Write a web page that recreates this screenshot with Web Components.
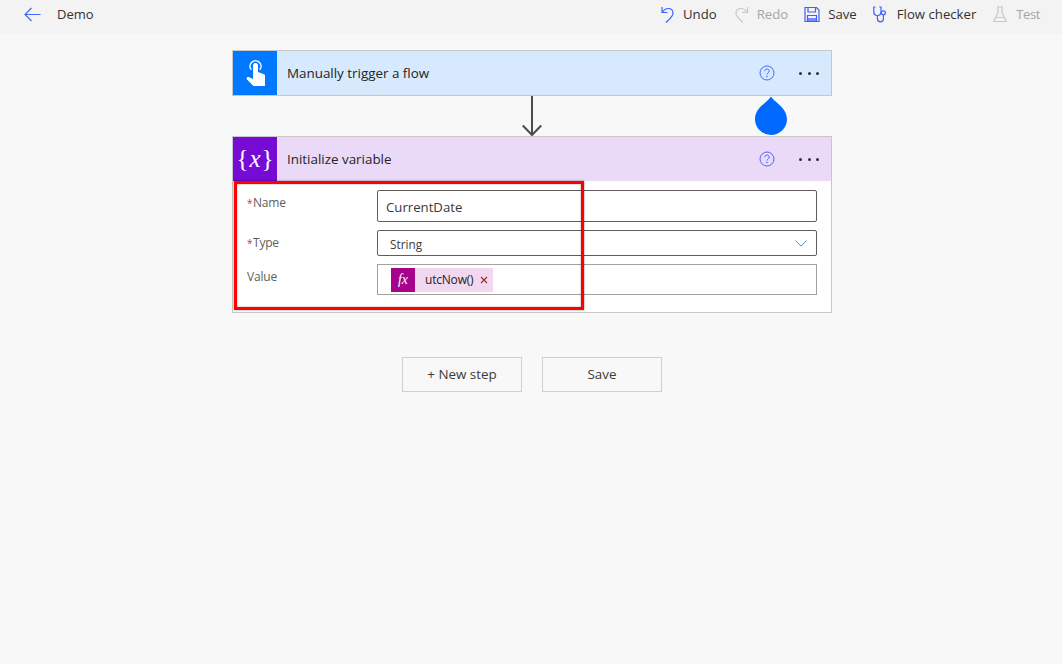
<!DOCTYPE html>
<html>
<head>
<meta charset="utf-8">
<title>Demo</title>
<style>
html, body { margin: 0; height: 100%; background: #f8f8f8; }
body { font-family: "Open Sans", "Noto Sans", sans-serif; color: #323130; }
</style>
</head>
<body>
<flow-designer>
    <flow-toolbar slot="toolbar" name="Demo">
        <tool-button icon="undo" label="Undo"></tool-button>
        <tool-button icon="redo" label="Redo" disabled></tool-button>
        <tool-button icon="save" label="Save"></tool-button>
        <tool-button icon="checker" label="Flow checker"></tool-button>
        <tool-button icon="test" label="Test" disabled style="letter-spacing:-.5px"></tool-button>
    </flow-toolbar>

    <flow-card title="Manually trigger a flow" kind="trigger"></flow-card>
    <flow-arrow></flow-arrow>
    <flow-card title="Initialize variable" kind="variable">
        <form-row label="Name" required style="--mb:8px">
            <text-box height="32" strong>CurrentDate</text-box>
        </form-row>
        <form-row label="Type" required style="--mb:8px">
            <text-box height="26" strong select small>String</text-box>
        </form-row>
        <form-row label="Value">
            <text-box height="31"><fx-chip>utcNow()</fx-chip></text-box>
        </form-row>
    </flow-card>

    <div slot="actions" style="display:flex;gap:20px;justify-content:center">
        <step-button>+ New step</step-button>
        <step-button>Save</step-button>
    </div>

    <red-box slot="overlay"></red-box>
</flow-designer>

<script>
const icons = {
    undo: `<path d="M3 1v5.500H8.500M3.300 6.300C5 3.800 6.500 2.500 9 2.500c3 0 5 2 5 4.800 0 3-2.500 5-5 7.200L7 16.500" />`,
    redo: `<path d="M14.500 1v5.500H9M14.200 6.300C12.500 3.800 10.500 2.500 8 2.500c-3 0-5 2-5 4.800 0 3 2.500 5 5 7.200l2 2" />`,
    save: `<path d="M1 1.500h11.500L15 4v11.500H1zM4 1.500v4.500h7.500V1.500M3.500 15.500V9.500h9v6" /><path d="M3.500 12h9v3.500h-9z" fill="currentColor" stroke="none" opacity=".7"/>`,
    checker: `<path d="M2.500 1H.8v4.500c0 2.500 1.600 4 3.600 4s3.600-1.500 3.600-4V1H6.300M4.400 9.500v3.300c0 1.800 1.300 3 3 3s3-1.200 3-3V9" /><circle cx="10.400" cy="6.800" r="2"/>`,
    test: `<path d="M5 1h6M6 1v5.500L1.500 15.500h13L10 6.500V1M3.500 11.500h9" />`
};

class FlowDesigner extends HTMLElement {
    connectedCallback() {
        this.attachShadow({ mode: "open" }).innerHTML = `
            <style>
                :host { display: block; position: relative; min-height: 664px; background: #f8f8f8; }
                main { width: 600px; margin: 16px auto 0; transform: translateX(1px); display: flex; flex-direction: column; }
                .actions { margin-top: 44px; }
            </style>
            <slot name="toolbar"></slot>
            <main>
                <slot></slot>
                <div class="actions"><slot name="actions"></slot></div>
            </main>
            <slot name="overlay"></slot>`;
    }
}

class FlowToolbar extends HTMLElement {
    connectedCallback() {
        this.attachShadow({ mode: "open" }).innerHTML = `
            <style>
                :host { display: flex; align-items: center; box-sizing: border-box; height: 34px; background: #f3f3f3; padding: 0 22px 6px 24px; font-size: 13px; }
                svg { width: 17px; height: 15px; fill: none; stroke: #4668ff; stroke-width: 1.200; }
                .name { margin-left: 16px; flex: 1; color: #323130; }
                .tools { display: flex; align-items: center; gap: 16px; }
            </style>
            <svg viewBox="0 0 17 15"><path d="M16.500 7.500H1M7.500 1 1 7.500 7.500 14"/></svg>
            <span class="name">${this.getAttribute("name")}</span>
            <div class="tools"><slot></slot></div>`;
    }
}

class ToolButton extends HTMLElement {
    connectedCallback() {
        const off = this.hasAttribute("disabled");
        this.attachShadow({ mode: "open" }).innerHTML = `
            <style>
                :host { display: inline-flex; align-items: center; gap: 8px; font-size: 13.200px; color: ${off ? "#a6a6a6" : "#323130"}; }
                svg { width: 16px; height: 17px; fill: none; stroke: ${off ? "#c8c8c8" : "#3f5fff"}; color: #3f5fff; stroke-width: 1.200; }
            </style>
            <svg viewBox="0 0 16 17">${icons[this.getAttribute("icon")]}</svg>
            <span>${this.getAttribute("label")}</span>`;
    }
}

class FlowCard extends HTMLElement {
    connectedCallback() {
        const trigger = this.getAttribute("kind") === "trigger";
        const tile = trigger
            ? `<svg viewBox="0 0 44 44" width="44" height="44" fill="#fff"><path d="M20 14.500a2.500 2.500 0 0 1 5 0V21l6 2.200c.7.3 1 .8 1 1.500V35H20.500l-6.500-6.500c-.5-.6-.5-1.500 0-2 .6-.6 1.500-.6 2.200-.2L20 28z"/><path d="M18.300 18.800a5.500 5.500 0 1 1 8.400 0" fill="none" stroke="#fff" stroke-width="1.500"/></svg>`
            : `<span class="x"><i>{</i><b>x</b><i>}</i></span>`;
        this.attachShadow({ mode: "open" }).innerHTML = `
            <style>
                :host { display: block; background: #fff; border: 1px solid #c8c8c8; font-size: 13px; }
                header { display: flex; align-items: center; height: 44px; background: ${trigger ? "#d7e9fd" : "#ebdaf7"}; }
                .tile { width: 44px; height: 44px; background: ${trigger ? "#0078ff" : "#770bd6"}; display: flex; align-items: center; justify-content: center; color: #fff; }
                .x { font-family: "Liberation Serif", serif; font-size: 25px; display: flex; gap: 1px; align-items: center; line-height: 1; margin-top: -2px; }
                .x i { font-style: normal; font-weight: 400; }
                .x b { font-style: italic; font-weight: 400; font-size: 25px; }
                h2 { flex: 1; margin: 0 0 0 10px; font-size: 13.400px; font-weight: 400; color: #252423; }
                .help { width: 16px; height: 16px; margin-right: 24px; }
                .more { display: flex; gap: 5.500px; margin-right: 12px; }
                .more span { width: 3px; height: 3px; background: #323130; border-radius: 50%; }
                .body { padding: 9px 14px 17px 14px; }
                :host([kind="trigger"]) .body { display: none; }
            </style>
            <header>
                <div class="tile">${tile}</div>
                <h2>${this.getAttribute("title")}</h2>
                <svg class="help" viewBox="0 0 16 16" fill="none" stroke="#4668ff"><circle cx="8" cy="8" r="7"/><path d="M5.800 6.200c0-1.300 1-2.200 2.200-2.200s2.200.9 2.200 2.100c0 1.600-2.200 1.800-2.200 3.500"/><circle cx="8" cy="11.600" r=".4"/></svg>
                <div class="more"><span></span><span></span><span></span></div>
            </header>
            <div class="body"><slot></slot></div>`;
    }
}

class FlowArrow extends HTMLElement {
    connectedCallback() {
        this.attachShadow({ mode: "open" }).innerHTML = `
            <style>
                :host { display: block; height: 40px; position: relative; }
                .arrow { display: block; position: absolute; left: 290px; top: 0; }
                .drop { display: block; position: absolute; left: 522px; top: 0; }
            </style>
            <svg class="arrow" width="20" height="40" viewBox="0 0 20 40" fill="none" stroke="#4c4c4c" stroke-width="2"><path d="M10 0v39M.8 29.500 10 39l9.200-9.500"/></svg>
            <svg class="drop" width="34" height="40" viewBox="0 0 34 40"><path fill="#0069ff" d="M17 .5C20 6 33 11.500 33 23A16 16 0 0 1 1 23C1 11.500 14 6 17 .5z"/></svg>`;
    }
}

class FormRow extends HTMLElement {
    connectedCallback() {
        const req = this.hasAttribute("required") ? `<em>*</em>` : "";
        this.attachShadow({ mode: "open" }).innerHTML = `
            <style>
                :host { display: flex; align-items: flex-start; margin-bottom: var(--mb, 0); font-size: 12px; color: #605e5c; }
                .label { width: 130px; padding-top: 4px; letter-spacing: -.2px; line-height: 17px; }
                em { display: inline-block; width: 6px; font-style: normal; font-size: 10px; color: #d13438; }
                .field { flex: 1; min-width: 0; }
            </style>
            <div class="label">${req}${this.getAttribute("label")}</div>
            <div class="field"><slot></slot></div>`;
    }
}

class TextBox extends HTMLElement {
    connectedCallback() {
        const strong = this.hasAttribute("strong");
        const small = this.hasAttribute("small");
        const chevron = this.hasAttribute("select")
            ? `<svg width="12" height="7" viewBox="0 0 12 7" fill="none" stroke="#5d8fc7"><path d="M.5.500 6 6l5.500-5.500"/></svg>`
            : "";
        this.attachShadow({ mode: "open" }).innerHTML = `
            <style>
                :host { display: flex; align-items: center; justify-content: space-between; box-sizing: border-box; height: ${this.getAttribute("height")}px; background: #fff;
                    border: 1px solid ${strong ? "#605e5c" : "#a0a0a0"}; border-radius: ${strong ? 2 : 0}px;
                    padding: ${strong ? 1 : 0}px 9px 0 ${small ? 12 : 8}px; font-size: ${small ? 11.800 : 13.200}px; color: #3b3a39; }
                :host(:not([strong])) { padding-left: 13px; }
            </style>
            <slot></slot>${chevron}`;
    }
}

class FxChip extends HTMLElement {
    connectedCallback() {
        this.attachShadow({ mode: "open" }).innerHTML = `
            <style>
                :host { display: inline-flex; align-items: center; height: 24px; background: #f2d8ef; font-size: 12px; letter-spacing: -.2px; color: #252423; }
                .fx { width: 24px; height: 24px; background: #a6038c; color: #fff; display: flex; align-items: center; justify-content: center;
                    font: italic 14px "Liberation Serif", serif; letter-spacing: 0; }
                .text { margin: 0 7px 1px 10px; }
                svg { margin-right: 5px; }
            </style>
            <span class="fx">fx</span><span class="text"><slot></slot></span>
            <svg width="8" height="8" viewBox="0 0 8 8" stroke="#a4262c" stroke-width="1.100"><path d="M1 1l6 6M7 1 1 7"/></svg>`;
    }
}

class StepButton extends HTMLElement {
    connectedCallback() {
        this.attachShadow({ mode: "open" }).innerHTML = `
            <style>
                :host { display: flex; align-items: center; justify-content: center; box-sizing: border-box; width: 120px; height: 35px; border: 1px solid #cfcfcf; padding-bottom: 2px; font-size: 13.400px; color: #3b3a39; }
            </style>
            <slot></slot>`;
    }
}

/* the annotation someone drew on top of the screenshot */
class RedBox extends HTMLElement {
    connectedCallback() {
        this.attachShadow({ mode: "open" }).innerHTML = `
            <style>
                :host { position: absolute; left: 234px; top: 181px; width: 350px; height: 129px; box-sizing: border-box; border: 3px solid #f00; box-shadow: 0 0 2px rgba(0,0,0,.5), inset 0 0 2px rgba(0,0,0,.4); pointer-events: none; }
            </style>`;
    }
}

customElements.define("flow-designer", FlowDesigner);
customElements.define("flow-toolbar", FlowToolbar);
customElements.define("tool-button", ToolButton);
customElements.define("flow-card", FlowCard);
customElements.define("flow-arrow", FlowArrow);
customElements.define("form-row", FormRow);
customElements.define("text-box", TextBox);
customElements.define("fx-chip", FxChip);
customElements.define("step-button", StepButton);
customElements.define("red-box", RedBox);
</script>
</body>
</html>
